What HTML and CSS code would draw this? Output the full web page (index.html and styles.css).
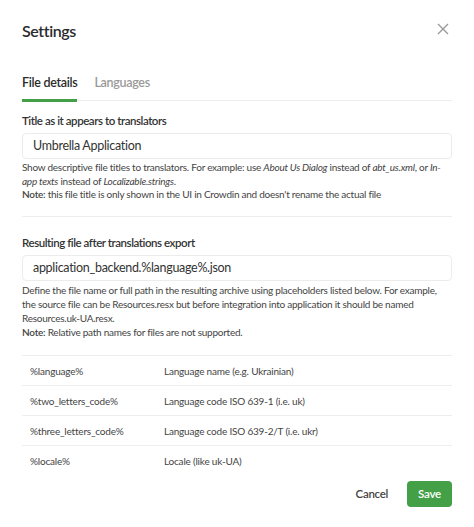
FILE: index.html
```html
<!DOCTYPE html>
<html lang="en">

<head>
    <meta charset="UTF-8" />
    <meta name="viewport" content="width=device-width, initial-scale=1.0" />
    <title>Settings</title>
    <link rel="stylesheet" href="styles.css">
</head>

<body>
    <div class="modal">
        <div class="modal-header">
            <h1>Settings</h1>
            <button class="close-btn" aria-label="Close">
                <svg width="12" height="12" viewBox="0 0 12 12">
                    <path d="M1 1 L11 11 M11 1 L1 11" stroke="#9a9a9a" stroke-width="1.4" fill="none" />
                </svg>
            </button>
        </div>
        <div class="tabs">
            <span class="tab active">File details</span>
            <span class="tab">Languages</span>
        </div>
        <section class="field">
            <label>Title as it appears to translators</label>
            <div class="input">Umbrella Application</div>
            <p class="help">Show descriptive file titles to translators. For example: use <em>About Us Dialog</em> instead of <em>abt_us.xml</em>, or <em>In-</em><em>app texts</em> instead of <em>Localizable.strings</em>.<br><b>Note:</b> this file title is only shown in the UI in Crowdin and doesn't rename the actual file</p>
        </section>
        <hr class="divider">
        <section class="field">
            <label>Resulting file after translations export</label>
            <div class="input">application_backend.%language%.json</div>
            <p class="help">Define the file name or full path in the resulting archive using placeholders listed below. For example, the source file can be Resources.resx but before integration into application it should be named Resources.uk-UA.resx.<br><b>Note:</b> Relative path names for files are not supported.</p>
        </section>
        <table class="placeholders">
            <tr><td>%language%</td><td>Language name (e.g. Ukrainian)</td></tr>
            <tr><td>%two_letters_code%</td><td>Language code ISO 639-1 (i.e. uk)</td></tr>
            <tr><td>%three_letters_code%</td><td>Language code ISO 639-2/T (i.e. ukr)</td></tr>
            <tr><td>%locale%</td><td>Locale (like uk-UA)</td></tr>
        </table>
        <div class="actions">
            <button class="cancel-btn">Cancel</button>
            <button class="save-btn">Save</button>
        </div>
    </div>
</body>

</html>
```

FILE: styles.css
```css
* {
    box-sizing: border-box;
    margin: 0;
    padding: 0;
}

body {
    font-family: 'Lato', sans-serif;
    background: white;
    color: #333;
}

.modal {
    padding: 18px 22px 0;
}

.modal-header {
    display: flex;
    justify-content: space-between;
    align-items: center;
    height: 24px;
}

.modal-header h1 {
    font-size: 16px;
    font-weight: 600;
    letter-spacing: -0.4px;
    color: #2b2b2b;
}

.close-btn {
    border: none;
    background: none;
    width: 14px;
    height: 14px;
    margin-right: 2px;
    cursor: pointer;
}

.tabs {
    display: flex;
    gap: 17px;
    margin-top: 33px;
    border-bottom: 1px solid #eee;
}

.tab {
    font-size: 12.5px;
    font-weight: 600;
    letter-spacing: -0.3px;
    line-height: 16px;
    color: #999;
    padding-bottom: 8px;
    border-bottom: 3px solid transparent;
    margin-bottom: -2px;
}

.tab.active {
    color: #2b2b2b;
    border-bottom-color: #43a047;
}

.field {
    padding-top: 13px;
}

.field label {
    display: block;
    font-size: 11.5px;
    font-weight: 600;
    letter-spacing: -0.45px;
    color: #333;
    line-height: 14px;
}

.input {
    margin-top: 5px;
    height: 26px;
    border: 1px solid #ececec;
    border-radius: 4px;
    padding: 0 10px;
    font-size: 12.5px;
    letter-spacing: -0.3px;
    line-height: 24px;
    color: #333;
}

.help {
    margin-top: 2px;
    font-size: 10px;
    letter-spacing: -0.25px;
    line-height: 13.7px;
    color: #444;
}

.help b {
    font-weight: 600;
}

.divider {
    border: none;
    border-top: 1px solid #eee;
    margin: 14px 0 6px;
}

.divider + .field .help {
    line-height: 14px;
}

.placeholders {
    width: 100%;
    border-collapse: collapse;
    margin-top: 16px;
    font-size: 10px;
    letter-spacing: -0.2px;
    color: #444;
}

.placeholders td {
    border-top: 1px solid #eee;
    height: 30px;
    padding: 0 0 0 8px;
}

.placeholders td:first-child {
    width: 134px;
}

.actions {
    display: flex;
    justify-content: flex-end;
    align-items: center;
    gap: 19px;
    margin-top: 5px;
}

.cancel-btn {
    border: none;
    background: none;
    font-family: inherit;
    font-size: 11.5px;
    font-weight: 600;
    letter-spacing: -0.3px;
    color: #444;
}

.save-btn {
    border: none;
    background: #43a047;
    color: white;
    font-family: inherit;
    font-size: 11.5px;
    font-weight: 600;
    letter-spacing: -0.2px;
    width: 45px;
    height: 26px;
    border-radius: 4px;
}
```
